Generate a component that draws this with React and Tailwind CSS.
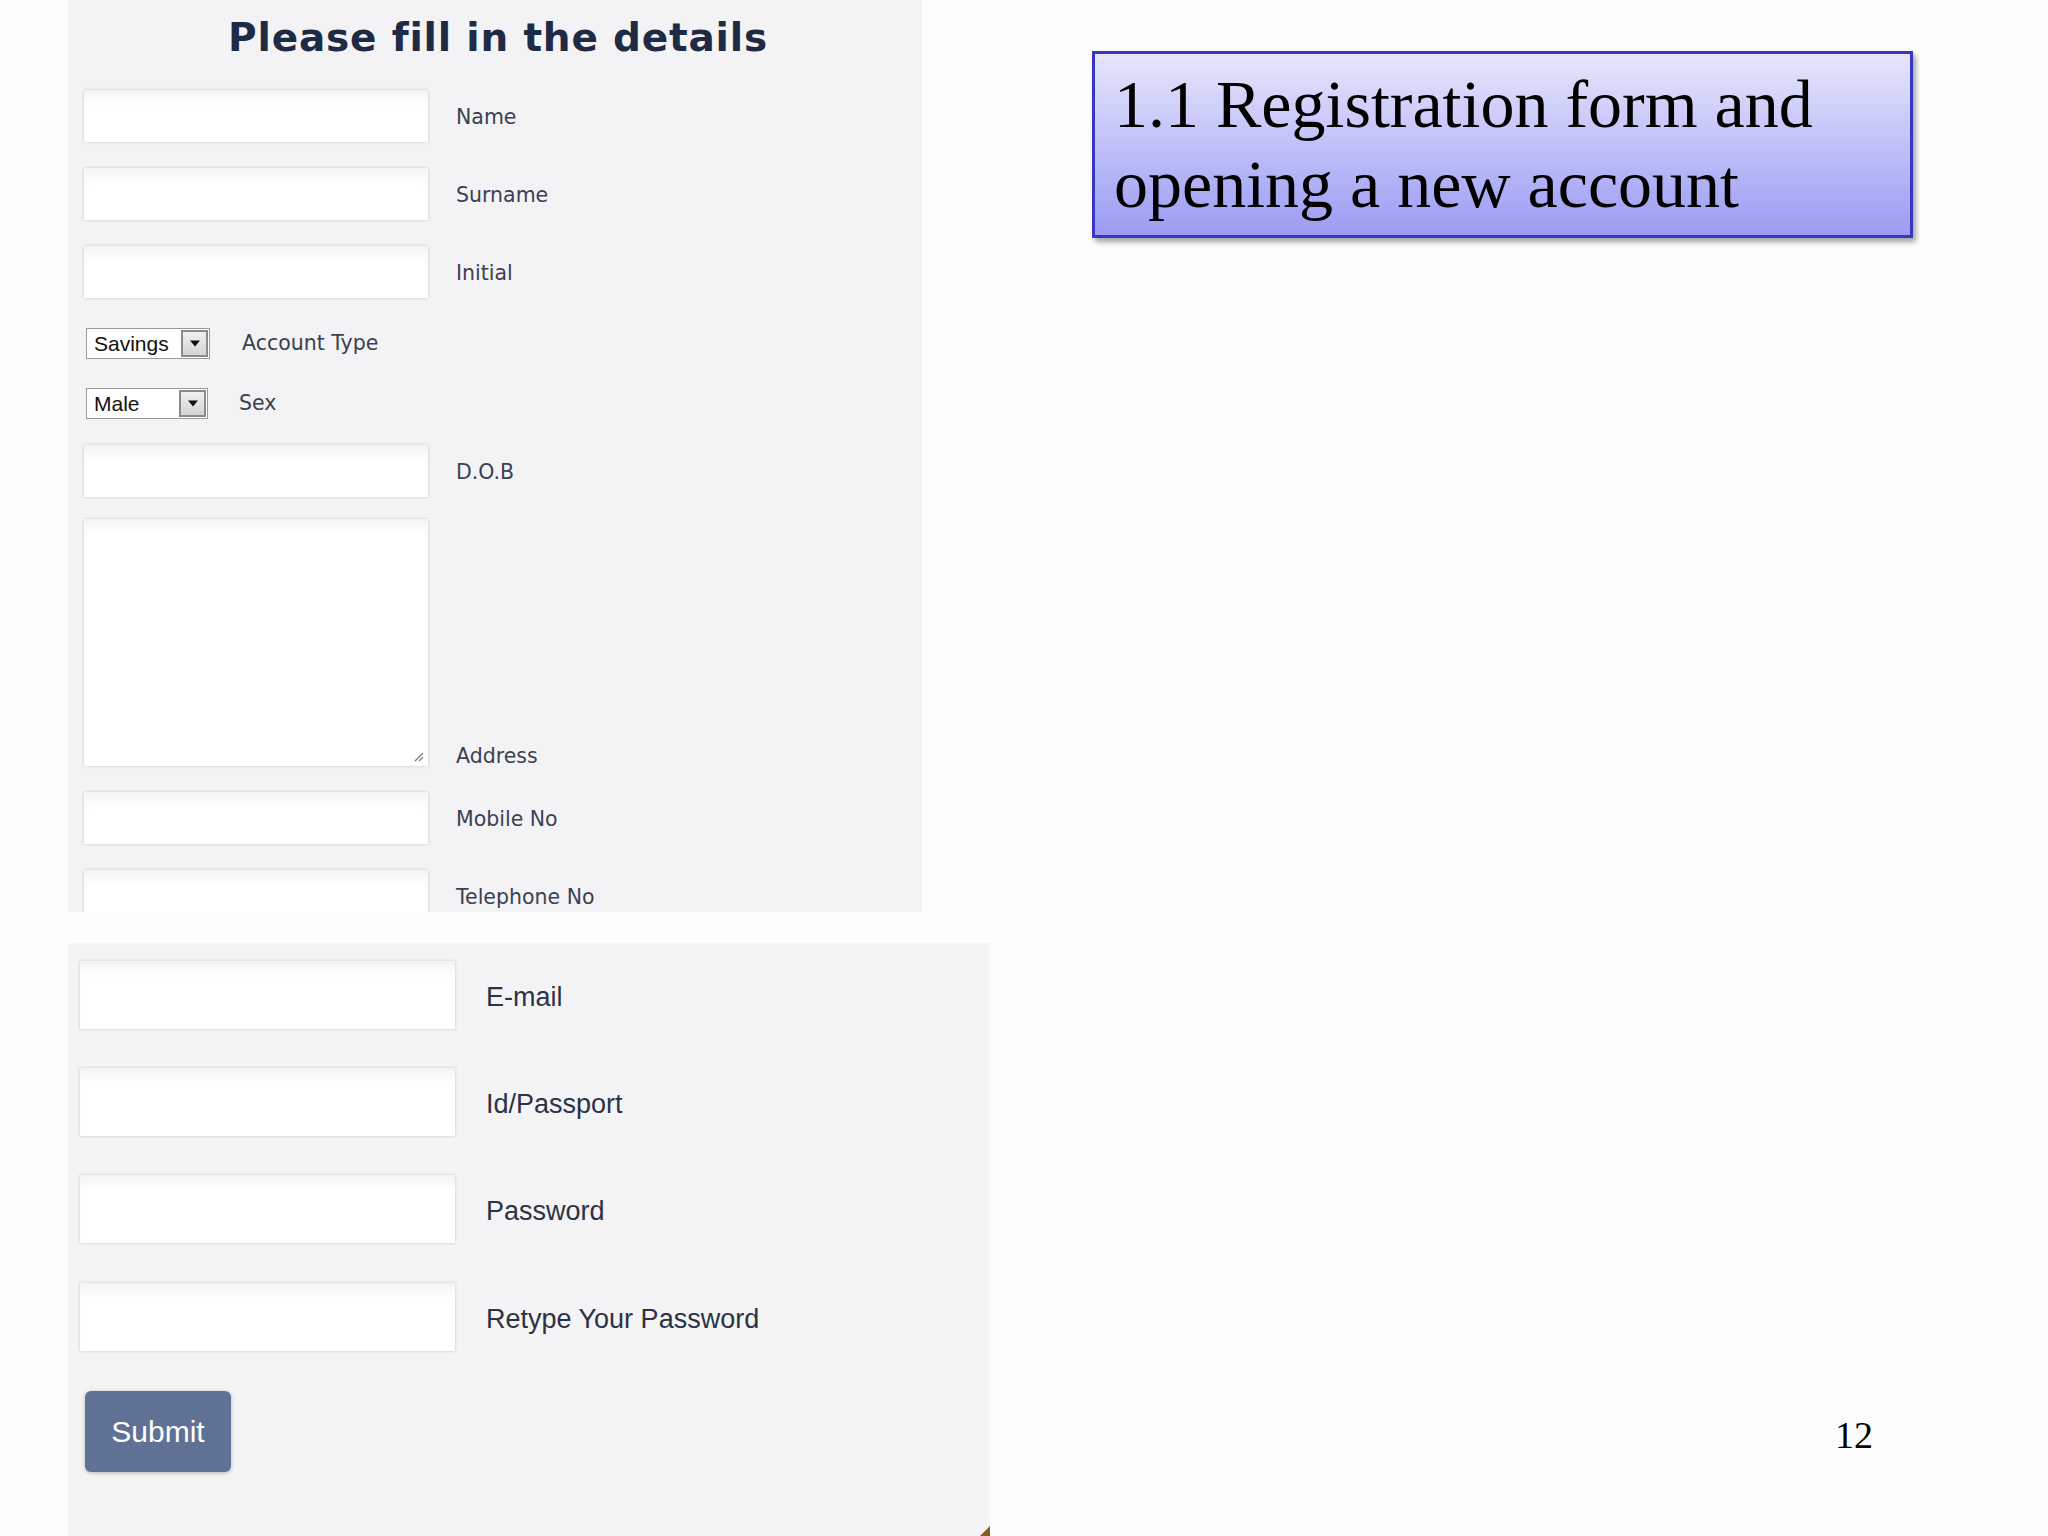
import React from "react";

const verdana = { fontFamily: '"DejaVu Sans", Verdana, sans-serif' };

// input box with the soft inset gradient of the screenshot
function Field({ className = "" }) {
  return (
    <div
      className={`bg-white shadow-[inset_0_14px_14px_-8px_rgba(0,0,0,0.06),0_0_3px_rgba(0,0,0,0.18)] ${className}`}
    />
  );
}

function FakeSelect({ value, width }) {
  return (
    <div className={`flex h-[31px] ${width} items-stretch border border-[#9a9a9a] bg-white`}>
      <span className="flex-1 pl-[7px] text-[21px] leading-[29px] text-[#111]" style={{ fontFamily: '"Liberation Sans", Arial, sans-serif' }}>
        {value}
      </span>
      <span className="m-[1px] flex w-[27px] items-center justify-center border-2 border-[#8a8a8a] bg-gradient-to-b from-[#f0f0f0] to-[#d4d4d4]">
        <svg width="12" height="7" viewBox="0 0 12 7">
          <path d="M1 0.5h10L6 6.5z" fill="#111" />
        </svg>
      </span>
    </div>
  );
}

function TopRow({ label, mt }) {
  return (
    <div className={`flex items-center ${mt}`}>
      <Field className="h-[52px] w-[344px]" />
      <span className="ml-[28px] pt-[3px] text-[20.5px] text-[#3a4152]" style={verdana}>
        {label}
      </span>
    </div>
  );
}

function BottomRow({ label, mt }) {
  return (
    <div className={`flex items-center ${mt}`}>
      <Field className="h-[68px] w-[375px]" />
      <span className="ml-[31px] pt-[4px] text-[27px] text-[#2c3344]" style={{ fontFamily: '"Liberation Sans", Tahoma, sans-serif' }}>
        {label}
      </span>
    </div>
  );
}

export default function App() {
  return (
    <div className="flex h-[1536px] w-[2048px] overflow-hidden bg-[#fcfcfd]">
      {/* left: the two form screenshots */}
      <div className="flex w-[990px] flex-col pl-[68px]">
        <div className="flex h-[912px] w-[854px] flex-col overflow-hidden bg-[#f3f3f5] pl-[16px]">
          <h1
            className="mt-[14px] h-[48px] pr-[10px] text-center text-[39px] font-bold leading-[48px] tracking-[0.8px] text-[#1f2a44]"
            style={verdana}
          >
            Please fill in the details
          </h1>

          <TopRow label="Name" mt="mt-[28px]" />
          <TopRow label="Surname" mt="mt-[26px]" />
          <TopRow label="Initial" mt="mt-[26px]" />

          <div className="ml-[2px] mt-[30px] flex h-[31px] items-center">
            <FakeSelect value="Savings" width="w-[124px]" />
            <span className="ml-[32px] text-[20.5px] leading-none text-[#3a4152]" style={verdana}>
              Account Type
            </span>
          </div>
          <div className="ml-[2px] mt-[29px] flex h-[31px] items-center">
            <FakeSelect value="Male" width="w-[122px]" />
            <span className="ml-[31px] text-[20.5px] leading-none text-[#3a4152]" style={verdana}>
              Sex
            </span>
          </div>

          <TopRow label="D.O.B" mt="mt-[26px]" />

          <div className="mt-[22px] flex items-end">
            <div className="relative">
              <Field className="h-[247px] w-[344px]" />
              <svg className="absolute bottom-[4px] right-[4px]" width="12" height="12" viewBox="0 0 12 12">
                <path d="M11 3L3 11M11 7L7 11" stroke="#777" strokeWidth="1.2" />
              </svg>
            </div>
            <span className="mb-[-6px] ml-[28px] text-[20.5px] text-[#3a4152]" style={verdana}>
              Address
            </span>
          </div>

          <TopRow label="Mobile No" mt="mt-[26px]" />
          <TopRow label="Telephone No" mt="mt-[26px]" />
        </div>

        <div className="relative mt-[31px] flex w-[922px] flex-1 flex-col bg-[#f4f4f6] pl-[12px]">
          <BottomRow label="E-mail" mt="mt-[18px]" />
          <BottomRow label="Id/Passport" mt="mt-[39px]" />
          <BottomRow label="Password" mt="mt-[39px]" />
          <BottomRow label="Retype Your Password" mt="mt-[40px]" />

          <button
            className="ml-[5px] mt-[40px] h-[81px] w-[146px] rounded-[6px] bg-[#5f7295] text-[30px] text-white shadow-[0_1px_4px_rgba(0,0,0,0.25)]"
            style={{ fontFamily: '"Liberation Sans", Tahoma, sans-serif' }}
          >
            Submit
          </button>

          <div className="absolute bottom-0 right-0 h-0 w-0 border-b-[10px] border-l-[10px] border-b-[#8a5a1e] border-l-transparent" />
        </div>
      </div>

      {/* right: slide title and page number */}
      <div className="flex flex-1 flex-col justify-between pb-[82px]">
        <div
          className="ml-[102px] mt-[51px] h-[187px] w-[821px] border-[3px] border-[#3a36c4] bg-gradient-to-b from-[#e6e6fb] to-[#9c9bf3] pl-[19px] pt-[10px] text-[68px] leading-[80px] text-black shadow-[3px_4px_5px_rgba(0,0,0,0.35)]"
          style={{ fontFamily: '"Liberation Serif", "Times New Roman", serif' }}
        >
          1.1 Registration form and
          <br />
          opening a new account
        </div>

        <div
          className="ml-[845px] text-[38px] leading-none text-black"
          style={{ fontFamily: '"Liberation Serif", "Times New Roman", serif' }}
        >
          12
        </div>
      </div>
    </div>
  );
}
